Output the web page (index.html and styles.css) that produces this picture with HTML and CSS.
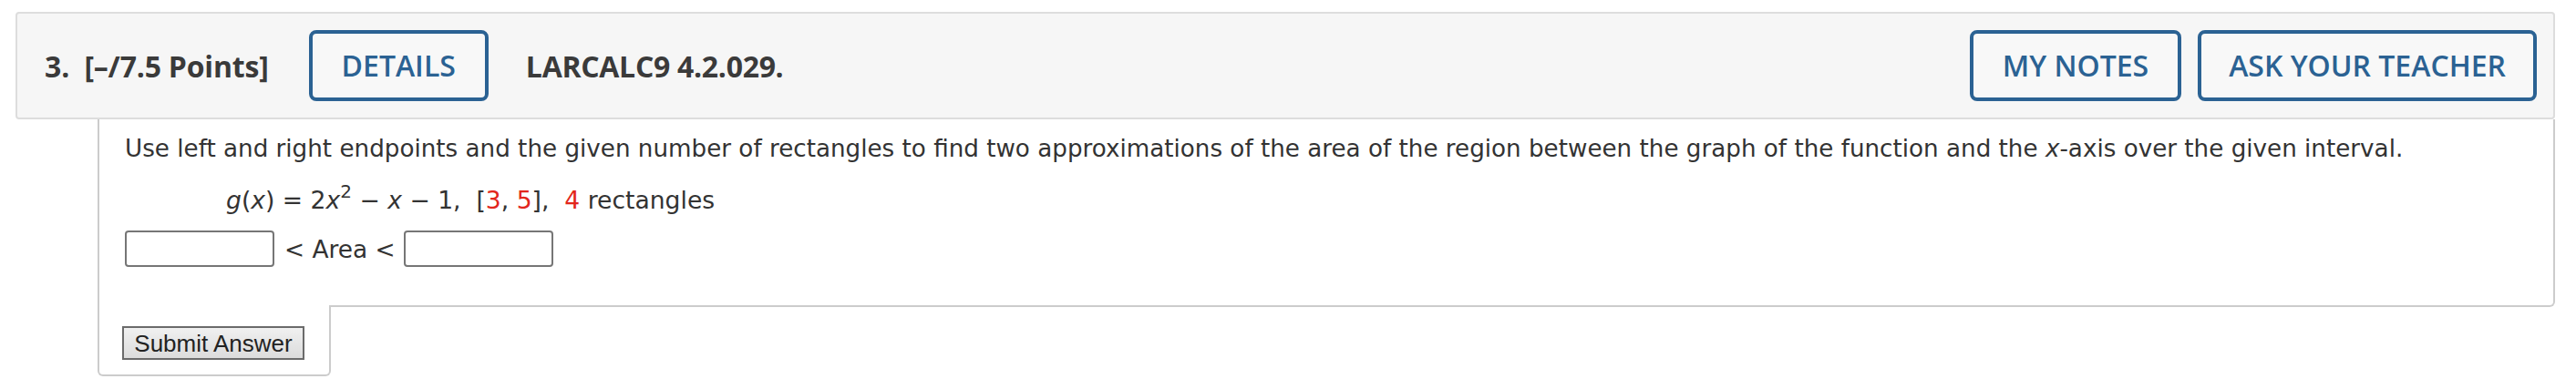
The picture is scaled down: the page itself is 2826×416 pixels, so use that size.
FILE: index.html
```html
<!DOCTYPE html>
<html lang="en">
<head>
<meta charset="utf-8">
<title>Question 3</title>
<link rel="stylesheet" href="styles.css">
</head>
<body>
<div class="question">
  <div class="q-header">
    <span class="q-num">3.</span>
    <span class="q-points">[–/7.5 Points]</span>
    <button class="hbtn details">DETAILS</button>
    <span class="q-code">LARCALC9 4.2.029.</span>
    <div class="hbtn-group">
      <button class="hbtn">MY NOTES</button>
      <button class="hbtn">ASK YOUR TEACHER</button>
    </div>
  </div>
  <div class="q-body">
    <p class="prompt">Use left and right endpoints and the given number of rectangles to find two approximations of the area of the region between the graph of the function and the <i>x</i>-axis over the given interval.</p>
    <p class="formula"><i>g</i>(<i>x</i>) = 2<i>x</i><sup>2</sup> − <i>x</i> − 1,&nbsp; [<span class="red">3</span>, <span class="red">5</span>],&nbsp; <span class="red">4</span> rectangles</p>
    <div class="answer-row">
      <input class="ans" type="text">
      <span class="area">&lt; Area &lt;</span>
      <input class="ans" type="text">
    </div>
  </div>
  <div class="q-submit">
    <button class="submit">Submit Answer</button>
  </div>
</div>
</body>
</html>
```

FILE: styles.css
```css
html, body {
  margin: 0;
  background: #ffffff;
}
body {
  padding: 13px 23px 0 17px;
}
.question {
  width: 2786px;
}
.q-header {
  display: flex;
  align-items: center;
  box-sizing: border-box;
  height: 118px;
  background: #f6f6f6;
  border: 2px solid #dddddd;
  border-radius: 4px;
  padding: 0 18px 0 30px;
  font-family: "Open Sans", "Liberation Sans", sans-serif;
  color: #3a3a3a;
}
.q-num {
  font-size: 32px;
  font-weight: 700;
  margin-right: 16px;
}
.q-points {
  font-size: 32px;
  font-weight: 700;
  letter-spacing: -0.2px;
}
.q-code {
  font-size: 32px;
  font-weight: 700;
  margin-left: 41px;
  letter-spacing: -0.3px;
}
.hbtn {
  box-sizing: border-box;
  height: 78px;
  padding: 0 32px;
  border: 4px solid #2b6293;
  border-radius: 8px;
  background: #f8f8f8;
  color: #2b6293;
  font-family: "Open Sans", "Liberation Sans", sans-serif;
  font-size: 32px;
  font-weight: 600;
  line-height: 1;
}
.details {
  margin-left: 44px;
}
.hbtn-group {
  margin-left: auto;
  display: flex;
  gap: 18px;
}
.hbtn-group .hbtn:last-child {
  padding: 0 30px;
}
.q-body {
  margin-left: 90px;
  border: 2px solid #cccccc;
  border-top: none;
  border-bottom-right-radius: 6px;
  padding: 17px 28px 42px 28px;
  font-family: "DejaVu Sans", Verdana, sans-serif;
  font-size: 26px;
  color: #333333;
}
.prompt {
  margin: 0;
  line-height: 30px;
  font-size: 26.2px;
}
.formula {
  margin: 27px 0 0 111px;
  line-height: 30px;
  font-size: 26.6px;
}
.formula sup {
  font-size: 20px;
  line-height: 0;
  vertical-align: 12px;
}
.red {
  color: #e2261c;
}
.answer-row {
  margin-top: 18px;
  display: flex;
  align-items: center;
}
.ans {
  box-sizing: border-box;
  width: 164px;
  height: 40px;
  border: 2px solid #767676;
  border-radius: 4px;
  background: #ffffff;
  margin: 0;
}
.area {
  margin: 0 9px 0 11px;
  font-size: 26.4px;
}
.q-submit {
  box-sizing: border-box;
  width: 256px;
  margin-left: 90px;
  margin-top: -2px;
  background: #ffffff;
  border: 2px solid #cccccc;
  border-top: none;
  border-radius: 0 0 6px 6px;
  padding: 23px 0 16px 25px;
  position: relative;
}
.submit {
  box-sizing: border-box;
  height: 37px;
  width: 200px;
  padding: 0;
  border: 2px solid #6b6b6b;
  background: linear-gradient(#f0f0f0, #dcdcdc);
  font-family: "Liberation Sans", Arial, sans-serif;
  font-size: 26px;
  color: #222222;
  line-height: 1;
}
```
